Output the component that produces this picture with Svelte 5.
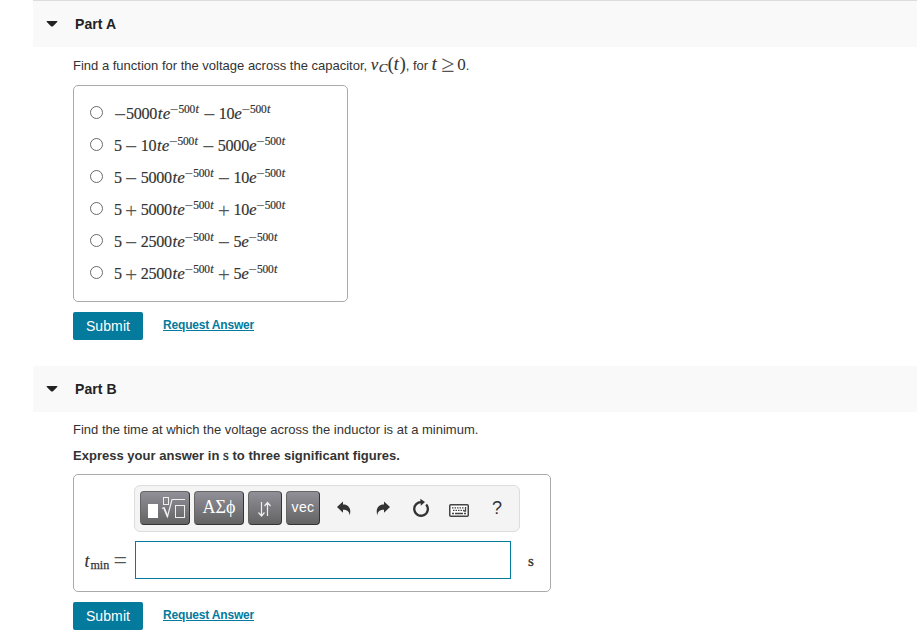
<script>
  const exp = [
    { k: 'sup', parts: [{ k: 'op', v: '−' }, { k: 'num', v: '500' }, { k: 't', v: 't' }] }
  ];
  const num = (v) => ({ k: 'num', v });
  const bin = (v) => ({ k: 'op bin', v });
  const T = { k: 't', v: 't' };
  const E = { k: 'e', v: 'e' };
  const options = [
    [{ k: 'op', v: '−' }, num('5000'), T, E, ...exp, bin('−'), num('10'), E, ...exp],
    [num('5'), bin('−'), num('10'), T, E, ...exp, bin('−'), num('5000'), E, ...exp],
    [num('5'), bin('−'), num('5000'), T, E, ...exp, bin('−'), num('10'), E, ...exp],
    [num('5'), bin('+'), num('5000'), T, E, ...exp, bin('+'), num('10'), E, ...exp],
    [num('5'), bin('−'), num('2500'), T, E, ...exp, bin('−'), num('5'), E, ...exp],
    [num('5'), bin('+'), num('2500'), T, E, ...exp, bin('+'), num('5'), E, ...exp]
  ];
  let selected = $state(null);
  let answer = $state('');
</script>

{#snippet tokens(list)}
  {#each list as p}{#if p.k === 'sup'}<span class="sup">{@render tokens(p.parts)}</span>{:else}<span class={p.k}><i>{p.v}</i></span>{/if}{/each}
{/snippet}

{#snippet heading(label)}
  <header>
    <svg width="12" height="6" viewBox="0 0 12 6"><path d="M1 0h10q.8.2.2 1L7 5.200q-1 .8-2 0L.8 1Q.2.2 1 0Z" fill="#222" /></svg>
    <h2>{label}</h2>
  </header>
{/snippet}

{#snippet actions()}
  <div class="actions">
    <button class="submit">Submit</button>
    <a href="#answer">Request Answer</a>
  </div>
{/snippet}

<main>
  <section class="a">
    {@render heading('Part A')}
    <div class="body">
      <p class="q">Find a function for the voltage across the capacitor, <span class="vc"><em class="v">v</em><em class="c">C</em><span class="par">(</span><em class="vt">t</em><span class="par">)</span></span>, for <span class="cond"><em>t</em><span class="ge">≥</span><span>0</span></span>.</p>
      <div class="choices">
        {#each options as opt, i}
          <label>
            <input type="radio" name="choice" value={i} bind:group={selected} />
            <span class="math">{@render tokens(opt)}</span>
          </label>
        {/each}
      </div>
      {@render actions()}
    </div>
  </section>

  <section class="b">
    {@render heading('Part B')}
    <div class="body">
      <p class="q2">Find the time at which the voltage across the inductor is at a minimum.</p>
      <p class="q3">Express your answer in <span class="unit">s</span> to three significant figures.</p>
      <div class="entry">
        <div class="toolbar">
          <button class="key wide" aria-label="Templates">
            <svg width="48" height="32" viewBox="0 0 48 32" fill="none" stroke="#eee">
              <rect x="7" y="12" width="10" height="14" fill="#fff" stroke="none" />
              <rect x="22.500" y="5.500" width="5" height="7" />
              <path d="M21 16.500l2-1 3.500 9L31 7.500h13" stroke-width="1.200" />
              <path d="M23 16l3.500 8.500" stroke-width="1.700" />
              <rect x="34.500" y="13.500" width="9" height="12" />
            </svg>
          </button>
          <button class="key wide greek">ΑΣϕ</button>
          <button class="key" aria-label="Subscripts">
            <svg width="32" height="32" viewBox="0 0 32 32" fill="none" stroke="#eee" stroke-width="1.200"><path d="M12.500 10v13.500M9.500 20.500l3 3.500 3-3.500M18.500 24V11M15.500 14l3-3.500 3 3.500" /></svg>
          </button>
          <button class="key vec">vec</button>
          <div class="tools">
            <svg width="14" height="15" viewBox="0 0 14 15"><path d="M0 6L6 .5v3c5.500 0 8.800 4 6.600 11C12.500 10.500 10 8.800 6 8.800v3Z" fill="#333" /></svg>
            <svg width="14" height="15" viewBox="0 0 14 15"><path d="M14 6L8 .5v3C2.500 3.500-.8 7.500 1.400 14.500 1.500 10.500 4 8.800 8 8.800v3Z" fill="#333" /></svg>
            <svg width="18" height="20" viewBox="0 0 18 20"><path d="M10 4.200A6.800 6.800 0 1 0 14.200 6.500" fill="none" stroke="#333" stroke-width="2.300" /><path d="M8.300.8L13 4 8.800 7.700Z" fill="#333" /></svg>
            <svg width="20" height="13" viewBox="0 0 20 13"><rect x=".75" y=".75" width="18.500" height="11.500" rx="1" fill="#fff" stroke="#444" stroke-width="1.500" /><path d="M3 3.800h12M4 6.300h11" stroke="#444" stroke-width="1.300" stroke-dasharray="1.500 1" /><path d="M16.500 3v4h-2M6 9.500h8M3 9.500h2M15 9.500h2" stroke="#444" stroke-width="1.300" fill="none" /></svg>
            <span class="help">?</span>
          </div>
        </div>
        <div class="field">
          <span class="lhs"><em>t</em><span class="min">min</span><span class="eq">=</span></span>
          <input type="text" bind:value={answer} aria-label="Answer" />
          <span class="s">s</span>
        </div>
      </div>
      {@render actions()}
    </div>
  </section>
</main>

<style>
  :global(body) { background: #fff; overflow: hidden; }
  main { height: 642px; overflow: hidden; font: 13px/18px "Liberation Sans", Arial, sans-serif; color: #333; }
  * { box-sizing: border-box; }
  section { margin-left: 33px; }
  .a { height: 366px; }
  header { height: 46px; background: #f9f9f9; display: flex; align-items: center; padding-left: 13px; gap: 17px; }
  .a header { height: 47px; border-top: 1px solid #ddd; }
  h2 { margin: 0; font-size: 14px; line-height: 18px; font-weight: bold; color: #222; letter-spacing: .1px; }
  .body { padding-left: 40px; }
  p { margin: 0; white-space: nowrap; height: 18px; }
  .q { padding-top: 10px; height: 38px; }
  .vc, .cond, .math, .lhs, .s, .unit { font-family: "Liberation Serif", "Times New Roman", serif; }
  .vc { display: inline-flex; align-items: baseline; font-size: 17px; line-height: 1px; -webkit-text-stroke: .15px; }
  .v { width: 8px; }
  .c { width: 9px; font-size: 13px; position: relative; top: 2px; }
  .par { width: 6px; font-size: 18px; }
  .vt { width: 6px; font-size: 18px; }
  .cond { display: inline-flex; align-items: baseline; font-size: 17px; line-height: 1px; }
  .cond em { width: 9.500px; font-size: 18px; -webkit-text-stroke: .2px; }
  .ge { width: 16px; font-size: 24px; color: #555; position: relative; top: 2px; }
  .choices { width: 275px; height: 217px; border: 1px solid #aaa; border-radius: 5px; padding: 10px 16px; }
  label { display: flex; align-items: center; height: 32px; }
  input[type='radio'] { appearance: none; width: 13px; height: 13px; border: 1px solid #6b6b6b; border-radius: 50%; margin: 0 11px 0 0; background: #fff; }
  input[type='radio']:checked { background: #047a9c; }
  .math { display: flex; align-items: baseline; font-size: 15.500px; line-height: 20px; position: relative; top: 2px; -webkit-text-stroke: .15px; }
  .math i { font-style: normal; }
  .math span { flex: none; }
  .num i { font-size: 1.040em; line-height: 1px; letter-spacing: -.018em; }
  .op { display: inline-flex; width: .778em; justify-content: center; color: #555; -webkit-text-stroke: 0; }
  .op i { font-size: 1.400em; line-height: 1px; position: relative; top: .15em; }
  .bin { width: 1.222em; }
  .t { display: inline-block; width: .361em; }
  .e { display: inline-block; width: .466em; }
  .t i, .e i { font-style: italic; font-size: 1.100em; line-height: 1px; }
  .t i { margin-left: .04em; }
  .sup { display: inline-flex; align-items: baseline; font-size: 11px; position: relative; top: -6px; margin-right: .8px; -webkit-text-stroke: .2px; }
  .actions { display: flex; margin-top: 10px; height: 28px; }
  .submit { width: 70px; height: 28px; background: #047a9c; color: #fff; border: 0; border-radius: 2px; padding: 0; font: 14px/28px "Liberation Sans", Arial, sans-serif; letter-spacing: .1px; }
  a { margin-left: 20px; padding-top: 4px; color: #047a9c; font-weight: bold; font-size: 12px; letter-spacing: -.18px; text-decoration: underline; height: 20px; }
  .q2 { margin-top: 9px; }
  .q3 { margin-top: 8px; font-weight: bold; letter-spacing: .02px; }
  .unit { font-weight: normal; font-size: 15px; line-height: 10px; -webkit-text-stroke: .3px; }
  .entry { width: 478px; height: 118px; border: 1px solid #aaa; border-radius: 5px; margin-top: 9px; padding: 10px 0 0 10px; }
  .toolbar { margin-left: 50px; width: 386px; height: 47px; background: #f4f4f4; border: 1px solid #ddd; border-radius: 6px; display: flex; gap: 4px; padding: 5px; }
  .key { width: 34px; height: 34px; padding: 0; border: 1px solid #333; border-top-color: #666; border-left-color: #666; border-radius: 4px; background: linear-gradient(#918f98, #636363); color: #fff; display: flex; align-items: center; justify-content: center; }
  .wide { width: 50px; }
  .greek { font: 18px/30px "Liberation Serif", serif; padding-bottom: 2px; }
  .vec { font: 14px/30px "Liberation Sans", Arial, sans-serif; letter-spacing: .4px; padding-bottom: 2px; }
  .tools { display: flex; align-items: center; margin-left: 13px; height: 34px; }
  .tools svg + svg { margin-left: 25px; }
  .tools svg:nth-child(3) { margin-left: 22px; }
  .tools svg:nth-child(4) { margin: 4px 0 0 19px; }
  .help { margin-left: 23px; font: 18px/20px "Liberation Sans", Arial, sans-serif; }
  .field { display: flex; align-items: center; margin-top: 9px; }
  .lhs { width: 51px; display: flex; align-items: baseline; padding-top: 1px; }
  .lhs em { font-size: 18px; width: 6.500px; padding-left: .5px; -webkit-text-stroke: .15px; }
  .min { font-size: 12px; width: 23px; position: relative; top: 2px; -webkit-text-stroke: .25px; }
  .eq { font-size: 24px; line-height: 18px; color: #555; position: relative; top: 1px; }
  input[type='text'] { width: 376px; height: 38px; border: 1px solid #047a9c; padding: 0 8px; background: #fff; font-size: 16px; border-radius: 0; outline: 0; }
  .s { margin-left: 17px; padding-top: 1px; font-size: 15px; -webkit-text-stroke: .3px; }
</style>
